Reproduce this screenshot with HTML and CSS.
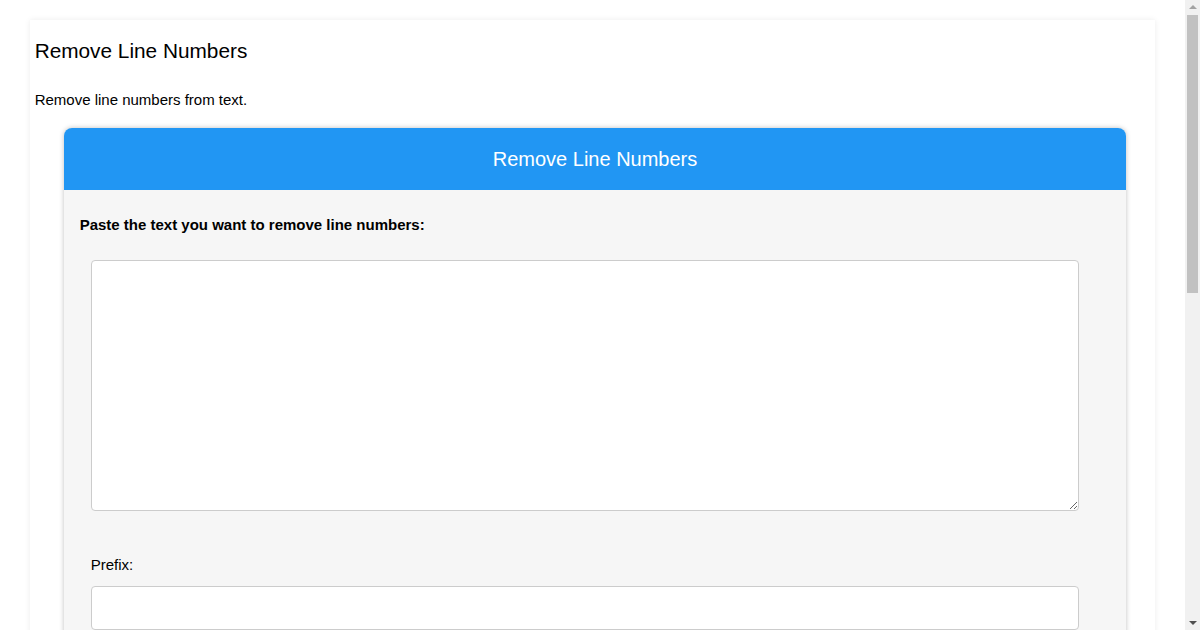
FILE: index.html
```html
<!DOCTYPE html>
<html lang="en">
<head>
    <meta charset="UTF-8">
    <meta name="viewport" content="width=device-width, initial-scale=1.0">
    <title>Remove Line Numbers</title>
    <link rel="stylesheet" href="styles.css">
</head>
<body>
    <div class="page">
        <h1>Remove Line Numbers</h1>
        <p class="intro">Remove line numbers from text.</p>

        <div class="tool-card">
            <div class="tool-header">Remove Line Numbers</div>
            <div class="tool-body">
                <label class="main-label" for="input-text">Paste the text you want to remove line numbers:</label>
                <textarea id="input-text" class="text-box"></textarea>

                <label class="field-label" for="prefix">Prefix:</label>
                <input id="prefix" class="field-input" type="text">

                <label class="field-label" for="suffix">Suffix:</label>
                <input id="suffix" class="field-input" type="text">

                <button class="run-btn" type="button">Remove Line Numbers</button>

                <label class="field-label" for="output-text">Result:</label>
                <textarea id="output-text" class="text-box" readonly></textarea>
            </div>
        </div>
    </div>

    <!-- window scrollbar, as it shows in the screenshot -->
    <div class="scrollbar">
        <span class="arrow arrow-up"></span>
        <span class="thumb"></span>
        <span class="arrow arrow-down"></span>
    </div>
</body>
</html>
```

FILE: styles.css
```css
html, body { margin: 0; padding: 0; background: #fff; font-family: "Liberation Sans", Arial, sans-serif; color: #000; }
body { margin-right: 15px; }
.page { width: 95%; margin: 20px auto; padding: 1px 5px 40px; box-sizing: border-box; background: #fff; box-shadow: 0 0 6px rgba(0,0,0,0.08); }
h1 { font-size: 20.8px; font-weight: normal; line-height: 24px; margin: 18px 0 28px; }
.intro { font-size: 15px; line-height: 18px; margin: 0 0 19px; }
.tool-card { margin: 0 24px 0 29px; border-radius: 8px; overflow: hidden; background: #f6f6f6; box-shadow: 0 0 5px rgba(0,0,0,0.25); }
.tool-header { background: #2196f3; color: #fff; text-align: center; height: 62px; line-height: 62px; font-size: 20px; }
.tool-body { padding: 26px 16px 30px; }
.main-label { display: block; font-size: 15px; font-weight: bold; line-height: 18px; margin-bottom: 26px; }
.text-box { display: block; box-sizing: border-box; width: 988px; height: 251px; margin-left: 11px; border: 1px solid #ccc; border-radius: 4px; background: #fff; font-family: inherit; font-size: 15px; }
.field-label { display: block; font-size: 15px; line-height: 18px; margin: 45px 0 12px 11px; }
.field-input { display: block; box-sizing: border-box; width: 988px; height: 44px; margin-left: 11px; border: 1px solid #ccc; border-radius: 4px; background: #fff; }
.field-input + .field-label { margin-top: 20px; }
.run-btn { display: block; margin: 25px 0 0 11px; padding: 12px 24px; background: #2196f3; color: #fff; border: 0; border-radius: 4px; font-family: inherit; font-size: 15px; }
.run-btn + .field-label { margin-top: 25px; }

.scrollbar { position: fixed; top: 0; right: 0; bottom: 0; width: 15px; background: #f1f1f1; display: flex; flex-direction: column; align-items: center; }
.arrow { width: 0; height: 0; border-left: 4px solid transparent; border-right: 4px solid transparent; }
.arrow-up { border-bottom: 4px solid #a3a3a3; margin: 5px 0 6px; }
.arrow-down { border-top: 4px solid #505050; margin: auto 0 5px; }
.thumb { width: 11px; height: 278px; background: #c1c1c1; }
```
